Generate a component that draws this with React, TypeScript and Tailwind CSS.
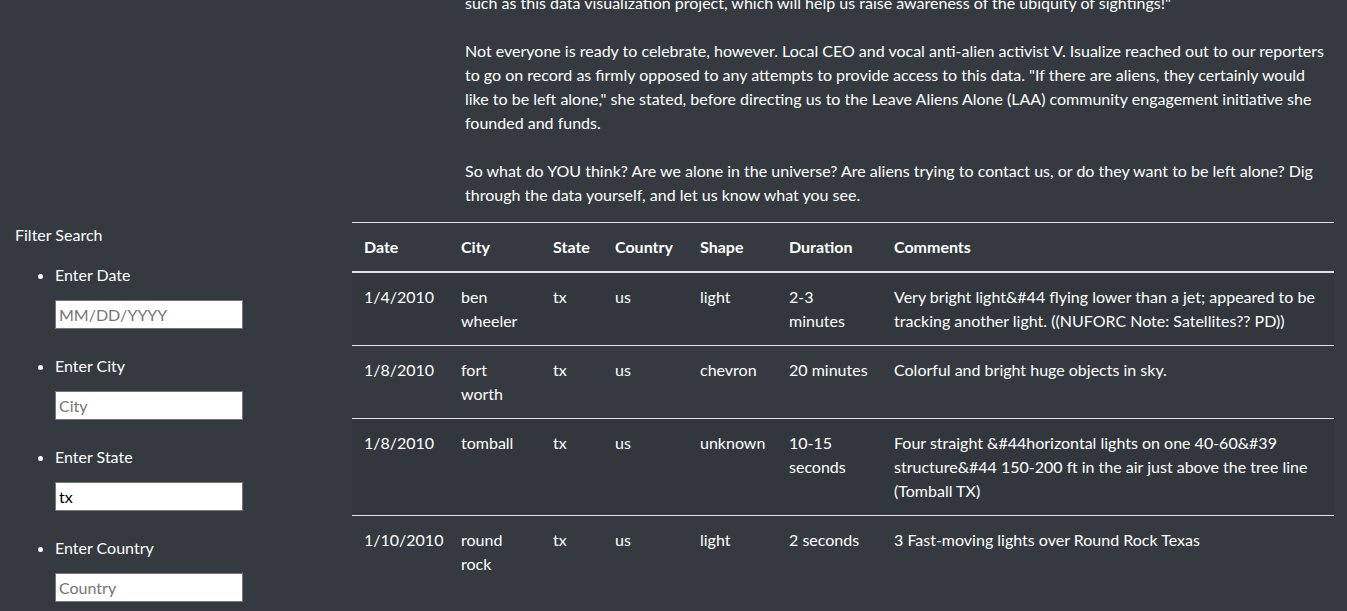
import React from 'react';

const sightings = [
  {
    date: '1/4/2010',
    city: 'ben wheeler',
    state: 'tx',
    country: 'us',
    shape: 'light',
    duration: '2-3 minutes',
    comments: 'Very bright light&#44 flying lower than a jet; appeared to be tracking another light. ((NUFORC Note: Satellites?? PD))',
  },
  {
    date: '1/8/2010',
    city: 'fort worth',
    state: 'tx',
    country: 'us',
    shape: 'chevron',
    duration: '20 minutes',
    comments: 'Colorful and bright huge objects in sky.',
  },
  {
    date: '1/8/2010',
    city: 'tomball',
    state: 'tx',
    country: 'us',
    shape: 'unknown',
    duration: '10-15 seconds',
    comments: 'Four straight &#44horizontal lights on one 40-60&#39 structure&#44 150-200 ft in the air just above the tree line (Tomball TX)',
  },
  {
    date: '1/10/2010',
    city: 'round rock',
    state: 'tx',
    country: 'us',
    shape: 'light',
    duration: '2 seconds',
    comments: '3 Fast-moving lights over Round Rock Texas',
  },
];

const filters = [
  { label: 'Enter Date', placeholder: 'MM/DD/YYYY', value: '' },
  { label: 'Enter City', placeholder: 'City', value: '' },
  { label: 'Enter State', placeholder: 'State', value: 'tx' },
  { label: 'Enter Country', placeholder: 'Country', value: '' },
];

export default function App() {
  return (
    <div className="min-h-screen overflow-hidden bg-[#343a40] text-white text-base leading-6 font-['Lato',sans-serif]">
      {/* intro copy, page is scrolled so the first paragraph is cut */}
      <div className="-mt-[9px] pl-[465px] pr-[18px]">
        <p>
          such as this data visualization project, which will help us raise awareness of the ubiquity of sightings!"
        </p>
        <p className="mt-6">
          Not everyone is ready to celebrate, however. Local CEO and vocal anti-alien activist V. Isualize reached out to our reporters to go on record as firmly opposed to any attempts to provide access to this data. "If there are aliens, they certainly would like to be left alone," she stated, before directing us to the Leave Aliens Alone (LAA) community engagement initiative she founded and funds.
        </p>
        <p className="mt-6">
          So what do YOU think? Are we alone in the universe? Are aliens trying to contact us, or do they want to be left alone? Dig through the data yourself, and let us know what you see.
        </p>
      </div>

      <div className="mt-[15px] flex">
        <aside className="w-[352px] shrink-0 pl-[15px] pt-px">
          <p>Filter Search</p>
          <ul className="mt-4 list-disc pl-10">
            {filters.map((f) => (
              <li key={f.label} className="mb-[25px]">
                <label>{f.label}</label>
                <input
                  type="text"
                  defaultValue={f.value}
                  placeholder={f.placeholder}
                  className="mt-[13px] block h-[29px] w-[188px] border border-[#767676] bg-white px-[3px] text-black placeholder:text-[#757575]"
                />
              </li>
            ))}
          </ul>
        </aside>

        <div className="w-[982px] shrink-0">
          <table className="w-full table-fixed border-collapse text-left">
            <thead>
              <tr className="border-t border-[#dee2e6]">
                <th className="w-[97px] border-b-2 border-[#dee2e6] p-3 align-bottom">Date</th>
                <th className="w-[92px] border-b-2 border-[#dee2e6] p-3 align-bottom">City</th>
                <th className="w-[62px] border-b-2 border-[#dee2e6] p-3 align-bottom">State</th>
                <th className="w-[85px] border-b-2 border-[#dee2e6] p-3 align-bottom">Country</th>
                <th className="w-[89px] border-b-2 border-[#dee2e6] p-3 align-bottom">Shape</th>
                <th className="w-[105px] border-b-2 border-[#dee2e6] p-3 align-bottom">Duration</th>
                <th className="border-b-2 border-[#dee2e6] p-3 align-bottom">Comments</th>
              </tr>
            </thead>
            <tbody>
              {sightings.map((s, i) => (
                <tr key={i} className={i % 2 === 0 ? 'border-t border-[#dee2e6] bg-[#31373d]' : 'border-t border-[#dee2e6]'}>
                  <td className="p-3 align-top">{s.date}</td>
                  <td className="p-3 align-top">{s.city}</td>
                  <td className="p-3 align-top">{s.state}</td>
                  <td className="p-3 align-top">{s.country}</td>
                  <td className="p-3 align-top">{s.shape}</td>
                  <td className="p-3 align-top">{s.duration}</td>
                  <td className="p-3 align-top">{s.comments}</td>
                </tr>
              ))}
            </tbody>
          </table>
        </div>
      </div>
    </div>
  );
}
